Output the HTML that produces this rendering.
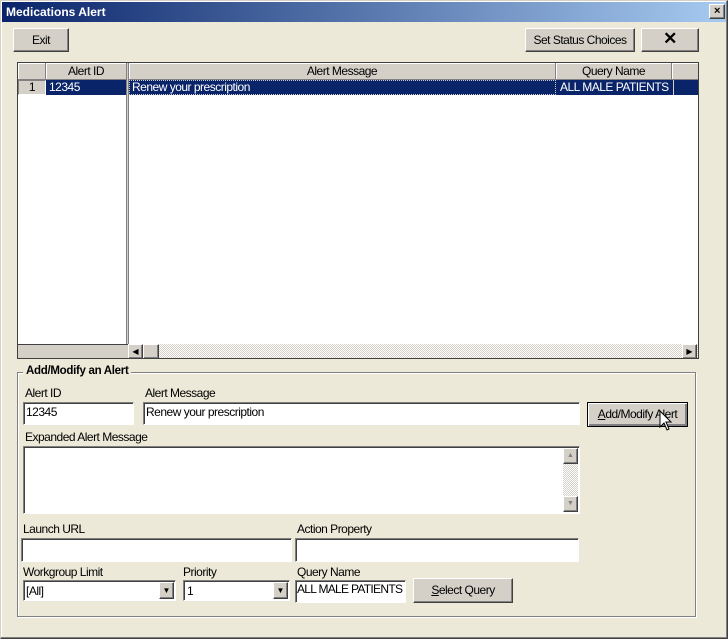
<!DOCTYPE html><html><head><style>
*{box-sizing:border-box;margin:0;padding:0}
body{width:728px;height:639px;background:#ece9d8;font-family:"Liberation Sans Narrow","Liberation Sans",sans-serif;font-size:12px;letter-spacing:-0.5px;color:#000;position:relative;overflow:hidden}
.a{position:absolute;white-space:nowrap}
.win{left:0;top:0;width:728px;height:639px;border:1px solid #d4d0c8;border-right-color:#404040;border-bottom-color:#404040;box-shadow:inset -1px -1px #808080,inset 1px 1px #fff}
.title{left:2px;top:2px;width:724px;height:20px;background:linear-gradient(90deg,#0a246a,#a6caf0);color:#fff;font-family:"Liberation Sans",sans-serif;font-weight:bold;font-size:12px;letter-spacing:0;line-height:20px;padding-left:4px}
.btn{background:#d4d0c8;border:1px solid;border-color:#fff #404040 #404040 #fff;box-shadow:inset -1px -1px #808080;text-align:center}
.sunk{background:#fff;border:1px solid;border-color:#808080 #fff #fff #808080;box-shadow:inset 1px 1px #404040;overflow:hidden}
.hdr{background:#d4d0c8;border-right:1px solid #808080;border-bottom:1px solid #808080;box-shadow:inset 1px 1px #fff;text-align:center;height:17px;line-height:16px;top:0}
.sb{background:#d4d0c8;border:1px solid;border-color:#fff #404040 #404040 #fff;box-shadow:inset -1px -1px #808080;letter-spacing:0}
.track{background:repeating-conic-gradient(#fff 0 25%,#d4d0c8 0 50%) 0 0/2px 2px}
</style></head><body>
<div class="a win"></div>
<div class="a title">Medications Alert</div>
<div class="a btn" style="left:709px;top:4px;width:16px;height:15px;font:bold 11px 'Liberation Sans';line-height:12px">×</div>

<div class="a btn" style="left:13px;top:28px;width:56px;height:24px;line-height:22px">Exit</div>
<div class="a btn" style="left:525px;top:28px;width:110px;height:24px;line-height:22px">Set Status Choices</div>
<div class="a btn" style="left:641px;top:28px;width:58px;height:24px;line-height:22px;font:bold 17px 'Liberation Sans'">✕</div>

<div class="a" style="left:17px;top:62px;width:682px;height:297px;background:#fff;border:1px solid #404040;overflow:hidden">
 <div class="a hdr" style="left:0;width:28px"></div>
 <div class="a hdr" style="left:28px;width:81px">Alert ID</div>
 <div class="a" style="left:108px;top:0;width:3px;height:281px;background:#d4d0c8;border-left:1px solid #808080;border-right:1px solid #808080"></div>
 <div class="a hdr" style="left:111px;width:427px">Alert Message</div>
 <div class="a hdr" style="left:538px;width:116px">Query Name</div>
 <div class="a hdr" style="left:654px;width:28px"></div>
 <div class="a" style="left:0;top:17px;width:28px;height:15px;background:#d4d0c8;border:1px solid;border-color:#808080 #fff #fff #808080;text-align:center;line-height:13px">1</div>
 <div class="a" style="left:28px;top:17px;width:80px;height:15px;background:#0a246a;color:#fff;padding-left:3px;line-height:15px">12345</div>
 <div class="a" style="left:111px;top:17px;width:571px;height:15px;background:#0a246a;color:#fff;line-height:15px">
  <span class="a" style="left:0;top:0;width:427px;height:15px;border:1px dotted #ccc;padding-left:2px;line-height:13px">Renew your prescription</span>
  <span class="a" style="left:429px;top:0;padding-left:2px;border-right:1px solid #d4d0c8;width:116px">ALL MALE PATIENTS</span>
 </div>
 <div class="a" style="left:0;top:281px;width:110px;height:15px;background:#d4d0c8;border-top:1px solid #404040"></div>
 <div class="a track" style="left:110px;top:281px;width:572px;height:15px"></div>
 <div class="a sb" style="left:110px;top:281px;width:15px;height:15px;font-size:8px;text-align:center;line-height:13px">◀</div>
 <div class="a sb" style="left:125px;top:281px;width:16px;height:15px"></div>
 <div class="a sb" style="left:664px;top:281px;width:15px;height:15px;font-size:8px;text-align:center;line-height:13px">▶</div>
</div>

<div class="a" style="left:17px;top:372px;width:679px;height:245px;border:1px solid #808080;box-shadow:1px 1px #fff,inset 1px 1px #fff"></div>
<div class="a" style="left:23px;top:365px;background:#ece9d8;padding:0 3px;font-weight:bold;font-family:'Liberation Sans',sans-serif;font-size:11.5px;letter-spacing:-0.3px">Add/Modify an Alert</div>

<div class="a" style="left:25px;top:386px">Alert ID</div>
<div class="a sunk" style="left:23px;top:402px;width:111px;height:23px;padding:2px 0 0 2px">12345</div>
<div class="a" style="left:145px;top:386px">Alert Message</div>
<div class="a sunk" style="left:143px;top:402px;width:437px;height:23px;padding:2px 0 0 2px">Renew your prescription</div>
<div class="a btn" style="left:587px;top:402px;width:101px;height:25px;line-height:23px;border:1px solid #000;box-shadow:inset 1px 1px #fff,inset -2px -2px #808080"><u>A</u>dd/Modify Alert</div>
<svg class="a" style="left:659px;top:410px" width="14" height="24" viewBox="0 0 14 24"><path d="M1 1v16l4-4 3 7 2-1-3-7h5z" fill="#fff" stroke="#000"/></svg>

<div class="a" style="left:25px;top:430px">Expanded Alert Message</div>
<div class="a sunk" style="left:23px;top:446px;width:557px;height:68px"></div>
<div class="a track" style="left:563px;top:448px;width:15px;height:64px"></div>
<div class="a sb" style="left:563px;top:448px;width:15px;height:16px;font-size:7px;text-align:center;line-height:14px;color:#808080">▲</div>
<div class="a sb" style="left:563px;top:496px;width:15px;height:16px;font-size:7px;text-align:center;line-height:14px;color:#808080">▼</div>

<div class="a" style="left:23px;top:522px">Launch URL</div>
<div class="a sunk" style="left:21px;top:538px;width:271px;height:24px"></div>
<div class="a" style="left:297px;top:522px">Action Property</div>
<div class="a sunk" style="left:295px;top:538px;width:284px;height:24px"></div>

<div class="a" style="left:23px;top:565px">Workgroup Limit</div>
<div class="a sunk" style="left:23px;top:580px;width:153px;height:21px;padding:3px 0 0 2px">[All]</div>
<div class="a sb" style="left:159px;top:582px;width:15px;height:17px;font-size:8px;text-align:center;line-height:15px">▼</div>
<div class="a" style="left:183px;top:565px">Priority</div>
<div class="a sunk" style="left:183px;top:580px;width:107px;height:21px;padding:3px 0 0 3px">1</div>
<div class="a sb" style="left:273px;top:582px;width:15px;height:17px;font-size:8px;text-align:center;line-height:15px">▼</div>
<div class="a" style="left:297px;top:565px">Query Name</div>
<div class="a sunk" style="left:295px;top:580px;width:111px;height:23px;padding:1px 0 0 1px;letter-spacing:-0.7px">ALL MALE PATIENTS</div>
<div class="a btn" style="left:413px;top:578px;width:100px;height:25px;line-height:23px"><u>S</u>elect Query</div>
</body></html>
